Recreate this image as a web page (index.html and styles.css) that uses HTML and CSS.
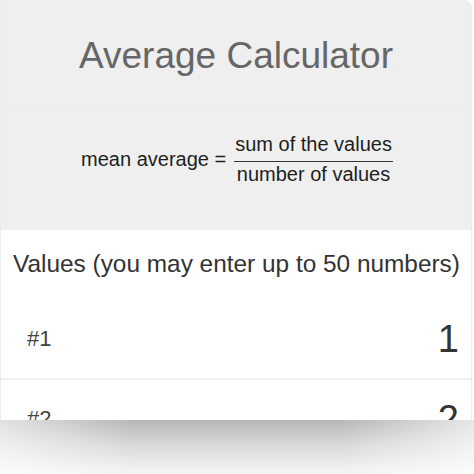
FILE: index.html
```html
<!DOCTYPE html>
<html>
<head>
<meta charset="utf-8">
<link rel="stylesheet" href="styles.css">
</head>
<body>
<div class="card">
  <div class="head">
    <h1 class="title">Average Calculator</h1>
    <div class="formula">
      <span class="lhs">mean average =</span>
      <span class="frac">
        <span class="num">sum of the values</span>
        <span class="den">number of values</span>
      </span>
    </div>
  </div>
  <div class="body">
    <div class="heading">Values (you may enter up to 50 numbers)</div>
    <div class="row"><span class="label">#1</span><span class="value">1</span></div>
    <div class="row"><span class="label">#2</span><span class="value">2</span></div>
  </div>
</div>
<div class="shadow"></div>
</body>
</html>
```
FILE: styles.css
```css
html, body {
  margin: 0;
  padding: 0;
  background: #ffffff;
}
body {
  width: 474px;
  height: 474px;
  overflow: hidden;
  font-family: "Liberation Sans", Arial, sans-serif;
}
.card {
  width: 472px;
  height: 420px;
  overflow: hidden;
  box-sizing: border-box;
  border-left: 1px solid #ececec;
  border-right: 1px solid #ececec;
  border-top-right-radius: 7px;
  background: #ffffff;
}
.head {
  background: #efefef;
  height: 230px;
}
.title {
  margin: 0;
  height: 107px;
  box-sizing: border-box;
  padding-top: 37px;
  border-bottom: 1px solid #ececec;
  font-size: 37px;
  line-height: 37px;
  font-weight: normal;
  color: #666666;
  text-align: center;
}
.formula {
  padding-top: 26px;
  display: flex;
  justify-content: center;
  align-items: center;
  gap: 8px;
  font-size: 20px;
  line-height: 22px;
  color: #1e1e1e;
  padding-left: 2px;
}
.frac {
  display: flex;
  flex-direction: column;
  align-items: center;
}
.num {
  padding-bottom: 6px;
  border-bottom: 1.4px solid #333333;
  padding-left: 1px;
  padding-right: 1px;
}
.den {
  padding-top: 1px;
}
.body {
  background: #ffffff;
}
.heading {
  padding: 20px 0 22px 12px;
  font-size: 24.4px;
  line-height: 28px;
  color: #333333;
  white-space: nowrap;
}
.row {
  height: 78px;
  border-bottom: 2px solid #f1f1f1;
  display: flex;
  justify-content: space-between;
  align-items: center;
  padding: 0 12px 0 26px;
}
.label {
  font-size: 22px;
  line-height: 22px;
  color: #444444;
}
.value {
  font-size: 38px;
  line-height: 38px;
  color: #333333;
}
.shadow {
  height: 54px;
  background: linear-gradient(to bottom, #b6b6b6 0%, #d8d8d8 45%, #f6f6f6 100%);
  -webkit-mask-image: linear-gradient(to right, rgba(0,0,0,0.4) 0%, #000 28%, #000 72%, rgba(0,0,0,0.35) 100%);
  mask-image: linear-gradient(to right, rgba(0,0,0,0.4) 0%, #000 28%, #000 72%, rgba(0,0,0,0.35) 100%);
}
```
